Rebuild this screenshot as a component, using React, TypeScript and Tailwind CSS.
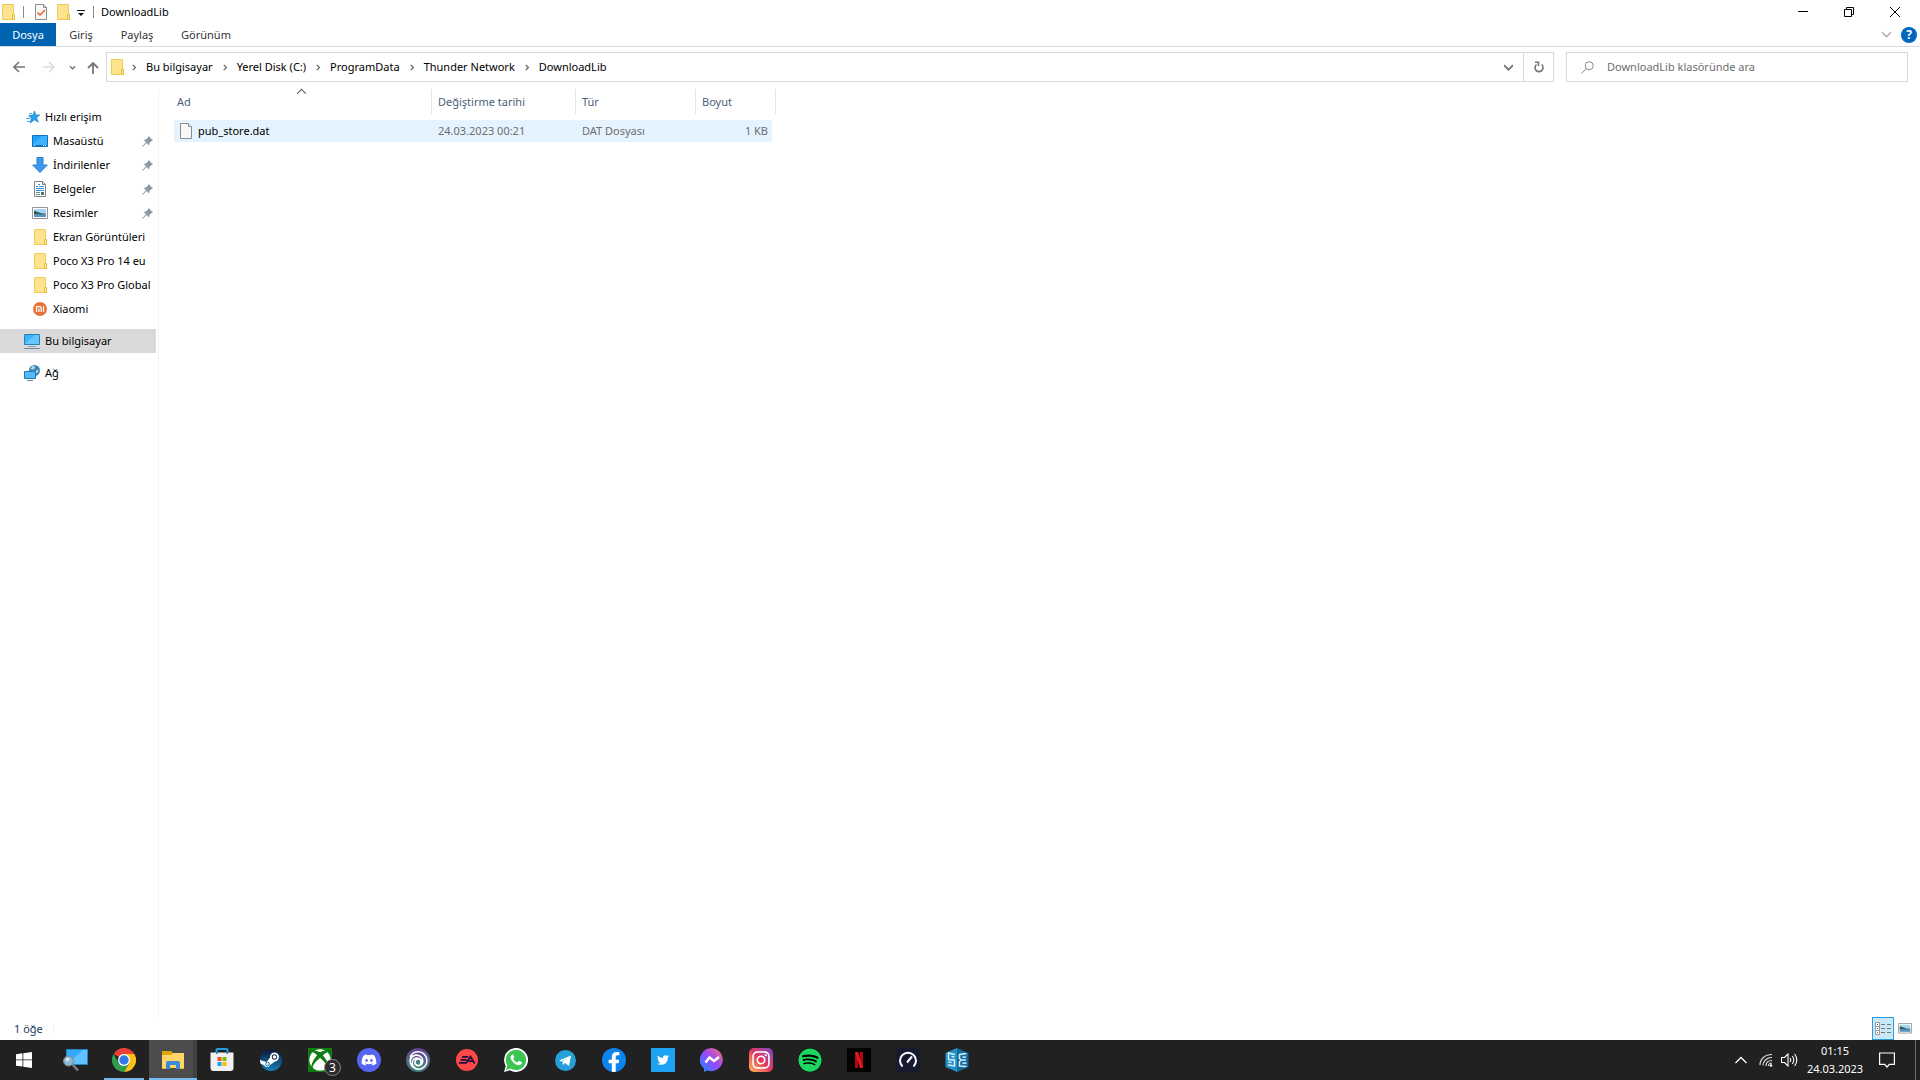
import React, { type ReactNode } from "react";
import { FaDiscord, FaFacebookF, FaInstagram, FaSpotify, FaTwitter, FaXbox } from "react-icons/fa";
import { SiUbisoft } from "react-icons/si";

const ui = "font-['Noto_Sans','Open_Sans',sans-serif]";

function FolderIcon() {
  return (
    <svg width="13" height="16" viewBox="0 0 13 16" aria-hidden="true">
      <path d="M.5.5h11v9.500l1 .5v5H.5z" fill="#ffe48f" stroke="#eecb52" />
      <path d="M10.500 15.500v-5h2v5z" fill="#ffe9a2" stroke="#e6bd3c" />
    </svg>
  );
}

function Chevron({ className = "", d = "M2 1l3 3-3 3", size = 8, w = 1.500 }: { className?: string; d?: string; size?: number; w?: number }) {
  return (
    <svg className={className} width={size} height={size} viewBox="0 0 8 8" fill="none" stroke="currentColor" strokeWidth={w} aria-hidden="true">
      <path d={d} />
    </svg>
  );
}

function FileIcon() {
  return (
    <svg width="12" height="16" viewBox="0 0 12 16" aria-hidden="true">
      <path d="M.5.5h8l3 3v12H.5z" fill="#f8f8f8" stroke="#8c8c8c" />
      <path d="M8.500.5v3h3" fill="#fff" stroke="#8c8c8c" />
    </svg>
  );
}

function StarIcon() {
  return (
    <svg width="14" height="13" viewBox="0 0 14 13" aria-hidden="true">
      <path d="M8.500 0l1.300 4h4L10.600 6.700l1.700 4.500L8.300 8.800 4.300 12l1-4.700L2.800 4.500 7 4z" fill="#2b9fe8" stroke="#1681cc" strokeWidth=".7" />
      <path d="M3 2.500h3M0 7.500h4M1 10.500h3" stroke="#4fb2ee" />
    </svg>
  );
}

function DesktopIcon() {
  return (
    <svg width="16" height="12" viewBox="0 0 16 12" aria-hidden="true">
      <path d="M.5.5h15v11H.5z" fill="#1ea3fb" stroke="#0c73bf" />
      <path d="M1 9L10 1h5v9H1z" fill="#3eb2ff" />
      <path d="M1 10.500h14" stroke="#0c73bf" />
      <path d="M2 10.500h1M11 10.500h1M13 10.500h1" stroke="#fff" />
    </svg>
  );
}

function DownloadIcon() {
  return (
    <svg width="16" height="16" viewBox="0 0 16 16" aria-hidden="true">
      <path d="M5 .5h6V8h4.300L8 15.500.7 8H5z" fill="#3a99ea" stroke="#2c7fcb" />
    </svg>
  );
}

function DocumentIcon() {
  return (
    <svg width="12" height="16" viewBox="0 0 12 16" aria-hidden="true">
      <path d="M.5.5h8l3 3v12H.5z" fill="#fff" stroke="#7d858b" />
      <path d="M8.500.5v3h3" fill="none" stroke="#7d858b" />
      <path d="M4 3.500h2M2 5.500h2M5 5.500h5M2 7.500h8M2 9.500h8" stroke="#3a8dd0" />
      <path d="M2 11.500h4M2 13.500h4" stroke="#7d858b" />
      <path d="M7 11h3v3H7z" fill="#46796c" />
    </svg>
  );
}

function PictureIcon({ width = 16 }: { width?: number }) {
  return (
    <svg width={width} height={(width * 12) / 16} viewBox="0 0 16 12" aria-hidden="true">
      <path d="M.5.5h15v11H.5z" fill="#fff" stroke="#969696" />
      <path d="M2 2h12v8H2z" fill="#a5d4f5" />
      <path d="M2 4c3 0 5 2.500 12 2.700v1H2z" fill="#2c5b55" />
      <path d="M2 7.500c5-.8 8 0 12 0V10H2z" fill="#5a93c4" />
    </svg>
  );
}

function PinIcon() {
  return (
    <svg width="11" height="11" viewBox="0 0 11 11" aria-hidden="true">
      <path d="M6.500 0L11 4.500 9.500 5 7.500 7l-.3 2.500L4.700 7 .8 10.800 0 11l.2-.8L4 6.300 1.500 3.800 4 3.500 6 1.500z" fill="#8b97a3" />
    </svg>
  );
}

function XiaomiIcon() {
  return (
    <svg width="14" height="14" viewBox="0 0 14 14" aria-hidden="true">
      <circle cx="7" cy="7" r="7" fill="#e8713c" />
      <path d="M3.500 10V4.700h3.200q1.500 0 1.500 1.500V10M5.900 6.500V10M10.500 4.200V10" fill="none" stroke="#fff" strokeWidth="1.200" />
    </svg>
  );
}

function ComputerIcon() {
  return (
    <svg width="16" height="15" viewBox="0 0 16 15" aria-hidden="true">
      <path d="M.5.5h15v10H.5z" fill="#3db1fb" stroke="#2c7fb0" />
      <path d="M1 9.500L11 1h4v9H1z" fill="#66c6ff" />
      <path d="M4 12.500h8" stroke="#8aa0b0" />
      <path d="M0 14.500h16" stroke="#71899a" />
    </svg>
  );
}

function NetworkIcon() {
  return (
    <svg width="16" height="16" viewBox="0 0 16 16" aria-hidden="true">
      <circle cx="10.500" cy="5.500" r="5.500" fill="#3d86b0" />
      <path d="M8.500 1l2 .3.500 2-2.500 1.500-2-1zM12 5.500l2.500-1-.5 2.500-2 1.500z" fill="#a8dcf0" />
      <path d="M.5 6.500h11v7H.5z" fill="#50bafb" stroke="#2279b2" />
      <path d="M3 15.500h6" stroke="#71899a" />
    </svg>
  );
}

function TitleBar() {
  return (
    <header className="flex h-[23px] items-center">
      <span className="ml-0.5"><FolderIcon /></span>
      <span className="ml-2 h-3 w-px bg-[#8a8a8a]" />
      <button aria-label="Özellikler" className="ml-[11px]">
        <svg width="12" height="16" viewBox="0 0 12 16" aria-hidden="true">
          <path d="M.5.5h8l3 3v12H.5z" fill="#f7f7f7" stroke="#8c8c8c" />
          <path d="M8.500.5v3h3" fill="none" stroke="#8c8c8c" />
          <path d="M2.500 8.500l2.500 2.500 5-5" fill="none" stroke="#ee5a24" strokeWidth="1.500" />
        </svg>
      </button>
      <button aria-label="Yeni klasör" className="ml-2.5"><FolderIcon /></button>
      <button aria-label="Hızlı Erişim Araç Çubuğunu Özelleştir" className="ml-[7px] pt-1">
        <svg width="8" height="7" viewBox="0 0 8 7" aria-hidden="true">
          <path d="M0 0h8v1H0zM1 3h6L4 6z" fill="#111" />
        </svg>
      </button>
      <span className="ml-2 h-3 w-px bg-[#8a8a8a]" />
      <h1 className="ml-[7px] pt-px text-[11px] text-black">DownloadLib</h1>
      <div className="mr-0.5 ml-auto flex h-full">
        <button aria-label="Simge durumuna küçült" className="flex w-[46px] items-center justify-center">
          <svg width="10" height="10" viewBox="0 0 10 10" aria-hidden="true"><path d="M0 4h10v1H0z" /></svg>
        </button>
        <button aria-label="Önceki boyut" className="flex w-[46px] items-center justify-center">
          <svg width="10" height="10" viewBox="0 0 10 10" fill="none" stroke="#000" aria-hidden="true"><path d="M.5 2.500h7v7h-7zM2.500 2V.5h7v7H8" /></svg>
        </button>
        <button aria-label="Kapat" className="flex w-[46px] items-center justify-center">
          <svg width="10" height="10" viewBox="0 0 10 10" fill="none" stroke="#000" aria-hidden="true"><path d="M0 0l10 10M10 0L0 10" /></svg>
        </button>
      </div>
    </header>
  );
}

function RibbonTabs() {
  return (
    <nav className="flex h-6 items-stretch border-b border-[#dadbdc] text-[11px] text-[#333]" aria-label="Şerit">
      <button className="w-14 bg-[#0063b1] pt-px text-white">Dosya</button>
      <button className="w-[50px] pt-px">Giriş</button>
      <button className="w-[62px] pt-px">Paylaş</button>
      <button className="w-[76px] pt-px">Görünüm</button>
      <div className="mr-[3px] ml-auto flex items-center gap-2.5">
        <button aria-label="Şeridi genişlet" className="text-[#999]"><Chevron d="M0 2l4 4 4-4" w={1} size={9} /></button>
        <button aria-label="Yardım" className="flex size-4 items-center justify-center rounded-full bg-[#0067c0] text-[12px] font-bold text-white">?</button>
      </div>
    </nav>
  );
}

const crumbs = ["Bu bilgisayar", "Yerel Disk (C:)", "ProgramData", "Thunder Network", "DownloadLib"];

function AddressBar() {
  return (
    <div className="flex h-10 items-center pr-3">
      <div className="flex w-[106px] items-center text-[#707070]">
        <button aria-label="Geri" className="ml-[13px]">
          <svg width="12" height="12" viewBox="0 0 12 12" fill="none" stroke="#777" strokeWidth="1.600" aria-hidden="true"><path d="M12 6H1M6 1L1 6l5 5" /></svg>
        </button>
        <button aria-label="İleri" className="ml-[18px]">
          <svg width="12" height="12" viewBox="0 0 12 12" fill="none" stroke="#ddd" strokeWidth="1.600" aria-hidden="true"><path d="M0 6h11M6 1l5 5-5 5" /></svg>
        </button>
        <button aria-label="Son konumlar" className="ml-3.5"><Chevron d="M1 2.500l3 3 3-3" size={7} /></button>
        <button aria-label="Yukarı" className="ml-[11px] pt-0.5">
          <svg width="12" height="12" viewBox="0 0 12 12" fill="none" stroke="#777" strokeWidth="1.800" aria-hidden="true"><path d="M6 12V1M1 6l5-5 5 5" /></svg>
        </button>
      </div>
      <nav aria-label="Adres" className="flex h-[30px] flex-1 items-center border border-[#d9d9d9]">
        <span className="mr-[-2px] ml-1"><FolderIcon /></span>
        <ol className="flex items-center text-[11px] text-black">
          {crumbs.map((c) => (
            <li key={c} className="flex items-center">
              <Chevron className="mr-2 ml-[9px] text-[#666]" size={7} />
              <a href="#" className="whitespace-nowrap">{c}</a>
            </li>
          ))}
        </ol>
        <button aria-label="Önceki konumlar" className="mr-2.5 ml-auto text-[#777]"><Chevron d="M0 2l4 4 4-4" size={9} w={1.600} /></button>
        <button aria-label="Yenile" className="flex h-full w-[30px] items-center justify-center border-l border-[#d9d9d9]">
          <svg width="10" height="12" viewBox="0 0 10 12" fill="none" stroke="#777" strokeWidth="1.600" aria-hidden="true">
            <path d="M7.500 3.500A4 4 0 1 1 2.500 3.500M1 1.200h3.500V5" />
          </svg>
        </button>
      </nav>
      <label className="ml-3 flex h-[30px] w-[342px] items-center border border-[#d9d9d9]">
        <svg className="ml-3.5" width="13" height="13" viewBox="0 0 13 13" fill="none" stroke="#888" aria-hidden="true">
          <circle cx="8.200" cy="4.700" r="4" /><path d="M5.300 7.500L.5 12.500" />
        </svg>
        <input aria-label="Ara" placeholder="DownloadLib klasöründe ara" className="ml-[13px] flex-1 text-[11px] outline-none placeholder:text-[#6d6d6d]" />
      </label>
    </div>
  );
}

const quick: { name: string; icon: ReactNode; pinned?: boolean }[] = [
  { name: "Masaüstü", icon: <DesktopIcon />, pinned: true },
  { name: "İndirilenler", icon: <DownloadIcon />, pinned: true },
  { name: "Belgeler", icon: <DocumentIcon />, pinned: true },
  { name: "Resimler", icon: <PictureIcon />, pinned: true },
  { name: "Ekran Görüntüleri", icon: <FolderIcon /> },
  { name: "Poco X3 Pro 14 eu", icon: <FolderIcon /> },
  { name: "Poco X3 Pro Global", icon: <FolderIcon /> },
  { name: "Xiaomi", icon: <XiaomiIcon /> },
];

function Sidebar() {
  return (
    <aside className="mt-0.5 w-[159px] shrink-0 border-r border-[#f2f2f2] pt-4 text-[11px] text-black">
      <a href="#" className="flex h-6 items-center pl-[26px]"><StarIcon /><span className="ml-[5px]">Hızlı erişim</span></a>
      <ul>
        {quick.map((q) => (
          <li key={q.name}>
            <a href="#" className="flex h-6 items-center pl-8 whitespace-nowrap">
              <span className="flex w-4 justify-center">{q.icon}</span>
              <span className="ml-[5px]">{q.name}</span>
              {q.pinned && <span className="mr-[5px] ml-auto"><PinIcon /></span>}
            </a>
          </li>
        ))}
      </ul>
      <a href="#" className="mt-2 mr-0.5 flex h-6 items-center bg-[#d9d9d9] pl-6"><ComputerIcon /><span className="ml-[5px]">Bu bilgisayar</span></a>
      <a href="#" className="mt-2 flex h-6 items-center pl-6"><NetworkIcon /><span className="ml-[5px]">Ağ</span></a>
    </aside>
  );
}

function FileList() {
  const th = "border-r border-[#e5e5e5] pt-0.5 pl-1.5 text-left font-normal";
  return (
    <main className="flex-1 pt-0.5 pl-[15px]">
      <table className="table-fixed border-separate border-spacing-0 text-[11px]">
        <colgroup>
          <col className="w-[258px]" /><col className="w-[144px]" /><col className="w-[120px]" /><col className="w-20" />
        </colgroup>
        <thead className="text-[#4c607a]">
          <tr className="h-[25px]">
            <th className="relative border-r border-[#e5e5e5] pt-0.5 pl-[3px] text-left font-normal">
              Ad
              <Chevron className="absolute -top-0.5 left-1/2 -ml-1.5 text-[#666]" d="M0 6l4-4 4 4" size={9} w={1} />
            </th>
            <th className={th}>Değiştirme tarihi</th>
            <th className={th}>Tür</th>
            <th className={th}>Boyut</th>
          </tr>
        </thead>
        <tbody className="text-[#6d6d6d]">
          <tr aria-hidden="true"><td colSpan={4} className="h-1.5" /></tr>
          <tr className="h-[22px]">
            <td className="bg-[#e5f3ff] p-0">
              <div className="flex items-center pl-1.5 text-black"><FileIcon /><span className="ml-1.5">pub_store.dat</span></div>
            </td>
            <td className="bg-[#e5f3ff] pl-1.5">24.03.2023 00:21</td>
            <td className="bg-[#e5f3ff] pl-1.5">DAT Dosyası</td>
            <td className="p-0"><div className="mr-1 bg-[#e5f3ff] pr-1 text-right leading-[22px]">1 KB</div></td>
          </tr>
        </tbody>
      </table>
    </main>
  );
}

function StatusBar() {
  return (
    <footer className="flex h-[23px] items-center text-[11px] text-[#1e395b]">
      <span className="ml-3.5 pt-px">1 öğe</span>
      <span className="ml-2.5 h-2.5 w-px bg-[#f0f0f0]" />
      <button aria-label="Ayrıntılar" className="ml-auto flex h-full w-[22px] items-center justify-center border border-[#26a0da] bg-[#cbe8f6]">
        <svg width="16" height="13" viewBox="0 0 16 13" fill="none" aria-hidden="true">
          <path d="M.5.5h4v12h-4zM.5 4.500h4M.5 8.500h4" fill="#fff" stroke="#999" />
          <path d="M6 2.500h4M12 2.500h4M6 6.500h4M12 6.500h4M6 10.500h4M12 10.500h4" stroke="#777" />
          <path d="M2 2h1v1H2z" fill="#444" /><path d="M2 6h1v1H2z" fill="#1979d2" /><path d="M2 10h1v1H2z" fill="#e02020" />
        </svg>
      </button>
      <button aria-label="Büyük simgeler" className="mr-2 ml-1"><PictureIcon width={14} /></button>
    </footer>
  );
}

const SearchMonitor = (
  <svg width="25" height="24" viewBox="0 0 25 24" aria-hidden="true">
    <path d="M3.500 1.500h21v15h-21z" fill="#35abf8" stroke="#2484c4" /><path d="M4 16L20 2h4v14z" fill="#61c2ff" />
    <path d="M9 16l6 6.500" stroke="#777d84" strokeWidth="2.500" /><circle cx="5.500" cy="13" r="5" fill="#8bb8d6" stroke="#7b8791" />
    <circle cx="4.500" cy="11.500" r="2" fill="#d0e6f3" />
  </svg>
);

const Chrome = (
  <svg width="24" height="24" viewBox="0 0 24 24" aria-hidden="true">
    <path d="M12 12L1.600 6A12 12 0 0 1 22.400 6z" fill="#e94235" />
    <path d="M12 12V6h10.400A12 12 0 0 1 12 24l5.200-9z" fill="#fbc116" />
    <path d="M12 12l5.200 3L12 24A12 12 0 0 1 1.600 6l5.200 9z" fill="#2f9e4d" />
    <circle cx="12" cy="12" r="6" fill="#fff" /><circle cx="12" cy="12" r="4.700" fill="#3178ea" />
  </svg>
);

const Explorer = (
  <svg width="22" height="18" viewBox="0 0 22 18" aria-hidden="true">
    <path d="M0 0h9l2 2h11v4H0z" fill="#dca60c" /><path d="M0 4h9l2-2h11v15H0z" fill="#ffd568" />
    <path d="M4 18v-6q0-2 2-2h10q2 0 2 2v6h-4v-4H8v4z" fill="#398bd8" /><path d="M0 17h4v1H0zM18 17h4v1h-4z" fill="#e5b53b" />
  </svg>
);

const Store = (
  <svg width="24" height="24" viewBox="0 0 24 24" aria-hidden="true">
    <path d="M6.500 6V2q0-1 1-1h9q1 0 1 1v4" fill="none" stroke="#229be9" strokeWidth="2" />
    <path d="M.5 4.500h23V20q0 3-3 3h-17q-3 0-3-3z" fill="#f0f0f0" /><path d="M6 4h1.500v2H6zM16.500 4H18v2h-1.500z" fill="#1679c4" />
    <path d="M7.500 9h4v4h-4z" fill="#f15325" /><path d="M12.500 9h4v4h-4z" fill="#80bb03" /><path d="M7.500 14h4v4h-4z" fill="#07a6ef" /><path d="M12.500 14h4v4h-4z" fill="#ffb902" />
  </svg>
);

const Steam = (
  <svg width="22" height="22" viewBox="0 0 22 22" aria-hidden="true">
    <defs><linearGradient id="steam" x1="0" y1="0" x2="0" y2="1"><stop offset="0" stopColor="#0c1535" /><stop offset="1" stopColor="#1681bb" /></linearGradient></defs>
    <circle cx="11" cy="11" r="11" fill="url(#steam)" />
    <path d="M0 11l6.500 2 4-5 4.500 4.500-5 3.500a3 3 0 0 1-5.500.5L.5 14.500z" fill="#fff" />
    <circle cx="14.500" cy="8" r="3.600" fill="#18254b" stroke="#fff" strokeWidth="1.800" /><circle cx="14.500" cy="8" r="1.800" fill="#fff" />
    <circle cx="7.500" cy="15" r="1.800" fill="none" stroke="#176492" />
  </svg>
);

const Xbox = (
  <span className="relative flex size-6 items-center justify-center bg-[#107c10] text-white">
    <FaXbox size={22} />
    <span className="absolute top-[11px] left-4 flex size-[17px] items-center justify-center rounded-full border border-[#888] bg-[#2b2b2b] text-[12px]">3</span>
  </span>
);

const Discord = <span className="flex size-6 items-center justify-center rounded-full bg-[#5865f2] text-white"><FaDiscord size={16} /></span>;

const Ubisoft = <span className="flex size-6 items-center justify-center rounded-full bg-conic from-[#633d91] via-[#38877b] to-[#633d91] text-white"><SiUbisoft size={19} /></span>;

const Ea = (
  <svg width="22" height="22" viewBox="0 0 22 22" fill="none" aria-hidden="true">
    <circle cx="11" cy="11" r="11" fill="#ff4747" />
    <path d="M6 7.800h6.200M4.500 10.800h6M3 13.800h7.200L14.500 7.500l4.200 7M12.500 12.200h4.500" stroke="#1b1040" strokeWidth="1.700" />
  </svg>
);

const WhatsApp = (
  <svg width="24" height="24" viewBox="0 0 24 24" aria-hidden="true">
    <path d="M0 24l1.700-6A12 12 0 1 1 6 22.300z" fill="#fff" /><path d="M2 22l1.300-4.700A10.200 10.200 0 1 1 6.600 20.600z" fill="#3dc553" />
    <path d="M8.400 6.500c-.5 0-1.900.9-1.900 2.700 0 3 4.700 8 8.300 8 2 0 3-1.300 3-2.900l-3-1.500-1.500 1.700c-1.500-.5-3.500-2.300-4.100-3.800l1.200-1.500-1.200-2.700z" fill="#fff" />
  </svg>
);

const Telegram = (
  <svg width="21" height="21" viewBox="0 0 21 21" aria-hidden="true">
    <circle cx="10.500" cy="10.500" r="10.500" fill="#27a0da" />
    <path d="M4 10.500L16 5.500 14 16l-4-3-2 2-.5-3.500L13 7.500l-6.500 4z" fill="#fff" />
  </svg>
);

const Facebook = <span className="flex size-6 items-end justify-center overflow-hidden rounded-full bg-[#0b84ee] text-white"><FaFacebookF size={20} /></span>;

const Twitter = <span className="flex size-6 items-center justify-center bg-[#1da1f2] text-white"><FaTwitter size={12} /></span>;

const Messenger = (
  <svg width="24" height="24" viewBox="0 0 24 24" aria-hidden="true">
    <defs><linearGradient id="msg" x1="0" y1="1" x2="1" y2="0"><stop offset="0" stopColor="#1292ff" /><stop offset=".5" stopColor="#9647ff" /><stop offset="1" stopColor="#ff6a70" /></linearGradient></defs>
    <path d="M12 0a12 11.700 0 0 1 0 23.300c-2 0-3.500-.3-5-.8L4 24v-3.500A12 11.700 0 0 1 12 0z" fill="url(#msg)" />
    <path d="M5.500 14.500L9.500 9.500l4.500 3.500 5-4" fill="none" stroke="#fff" strokeWidth="2.500" />
  </svg>
);

const Instagram = <span className="flex size-6 items-center justify-center rounded-[5px] bg-linear-to-tr from-[#fdb94f] via-[#e4335e] to-[#7938c8] text-white"><FaInstagram size={20} /></span>;

const Spotify = <span className="flex size-6 items-center justify-center rounded-full bg-black text-[#1ed760]"><FaSpotify size={24} /></span>;

const Netflix = (
  <svg width="24" height="24" viewBox="0 0 24 24" aria-hidden="true">
    <path d="M0 0h24v24H0z" fill="#000" /><path d="M8 4h3v16H8zM13 4h3v16h-3z" fill="#b1060f" /><path d="M8 4h3l5 16h-3z" fill="#ec1622" />
  </svg>
);

const Speedtest = (
  <svg width="24" height="24" viewBox="0 0 24 24" fill="none" aria-hidden="true">
    <path d="M0 0h24v24H0z" fill="#181b30" />
    <path d="M6.500 18.500a8 8 0 1 1 11 0" stroke="#fff" strokeWidth="2" /><path d="M11 14.500L16 8.500" stroke="#fff" strokeWidth="2" />
  </svg>
);

const HexBadge = (
  <svg width="24" height="24" viewBox="0 0 24 24" fill="none" aria-hidden="true">
    <path d="M12 0l11.500 5v14L12 24z" fill="#126aa0" /><path d="M12 0v24L.5 19V5z" fill="#2292c4" />
    <path d="M10 6.500L3.500 5v6.500L9.500 12v6L3 17M9.500 9l-3-.5M6.500 14.500l-3-.5M21.500 5.500L14.500 6.500v4l2 1.500-2 1.500v4.500l7 .5M21 9l-3.500.2M17 12h4M17.500 15l4 .3" stroke="#d5effa" strokeWidth="1.500" />
  </svg>
);

const apps: { name: string; icon: ReactNode; state?: "open" | "active" }[] = [
  { name: "Uzak arama", icon: SearchMonitor },
  { name: "Chrome", icon: Chrome, state: "open" },
  { name: "Dosya Gezgini", icon: Explorer, state: "active" },
  { name: "Microsoft Store", icon: Store },
  { name: "Steam", icon: Steam },
  { name: "Xbox", icon: Xbox },
  { name: "Discord", icon: Discord },
  { name: "Ubisoft Connect", icon: Ubisoft },
  { name: "EA", icon: Ea },
  { name: "WhatsApp", icon: WhatsApp },
  { name: "Telegram", icon: Telegram },
  { name: "Facebook", icon: Facebook },
  { name: "Twitter", icon: Twitter },
  { name: "Messenger", icon: Messenger },
  { name: "Instagram", icon: Instagram },
  { name: "Spotify", icon: Spotify },
  { name: "Netflix", icon: Netflix },
  { name: "Speedtest", icon: Speedtest },
  { name: "SE", icon: HexBadge },
];

function Taskbar() {
  return (
    <footer className="flex h-10 items-stretch bg-[#212121] text-white">
      <button aria-label="Başlat" className="mr-[3px] flex w-12 items-center justify-center">
        <svg width="16" height="16" viewBox="0 0 16 16" fill="#fff" aria-hidden="true">
          <path d="M0 2.200L6.500 1.300v6.200H0zM7.300 1.200L16 0v7.500H7.300zM0 8.300h6.500v6.300L0 13.700zM7.300 8.300H16V16l-8.700-1.300z" />
        </svg>
      </button>
      <div className="flex gap-px">
        {apps.map((a) => (
          <button
            key={a.name}
            aria-label={a.name}
            className={
              a.state === "active"
                ? "relative flex w-12 items-center justify-center border-r-4 border-[#3f4443] bg-[#4c4c4c] pl-1"
                : "relative flex w-12 items-center justify-center"
            }
          >
            {a.icon}
            {a.state === "open" && <span className="absolute inset-x-1 bottom-0 h-0.5 bg-[#76b9ed]" />}
            {a.state === "active" && <span className="absolute -right-1 bottom-0 left-0 h-0.5 bg-[#76b9ed]" />}
          </button>
        ))}
      </div>
      <div className="ml-auto flex items-center">
        <button aria-label="Gizli simgeleri göster">
          <svg width="12" height="12" viewBox="0 0 12 12" fill="none" stroke="#fff" strokeWidth="1.300" aria-hidden="true"><path d="M.5 9L6 3.500 11.500 9" /></svg>
        </button>
        <button aria-label="Ağ" className="ml-3">
          <svg width="14" height="14" viewBox="0 0 14 14" fill="none" stroke="#ddd" strokeWidth="1.200" aria-hidden="true">
            <path d="M1 12C1 6 6 1.500 13 1.500M4 12.500c0-4.500 4-8 9-8M7 13c0-3.500 2.500-5.500 6-5.500M9.500 13c0-2 1.500-3 3.500-3" /><circle cx="12" cy="12.500" r="1.300" fill="#fff" stroke="none" />
          </svg>
        </button>
        <button aria-label="Ses" className="ml-2">
          <svg width="17" height="14" viewBox="0 0 17 14" fill="none" stroke="#fff" strokeWidth="1.100" aria-hidden="true">
            <path d="M.5 4.500h3L7 1v12L3.500 9.500h-3zM9 5q1.500 2 0 4M11.300 3q3 4 0 8M13.600 1q4.500 6 0 12" />
          </svg>
        </button>
        <button className="ml-2 w-[58px] text-center text-[11px] leading-[18px]"><span className="block">01:15</span><span className="block">24.03.2023</span></button>
        <button aria-label="Bildirimler" className="ml-[15px]">
          <svg width="16" height="16" viewBox="0 0 16 16" fill="none" stroke="#fff" strokeWidth="1.200" aria-hidden="true"><path d="M.6 1h14.800v11.400h-5L8 15l-2.400-2.600h-5z" /></svg>
        </button>
        <button aria-label="Masaüstünü göster" className="ml-5 h-10 w-[5px] border-l border-[#6b6b6b]" />
      </div>
    </footer>
  );
}

export default function App() {
  return (
    <div className={`${ui} flex h-screen flex-col overflow-hidden bg-white`}>
      <TitleBar />
      <RibbonTabs />
      <AddressBar />
      <div className="flex min-h-0 flex-1">
        <Sidebar />
        <FileList />
      </div>
      <StatusBar />
      <Taskbar />
    </div>
  );
}
